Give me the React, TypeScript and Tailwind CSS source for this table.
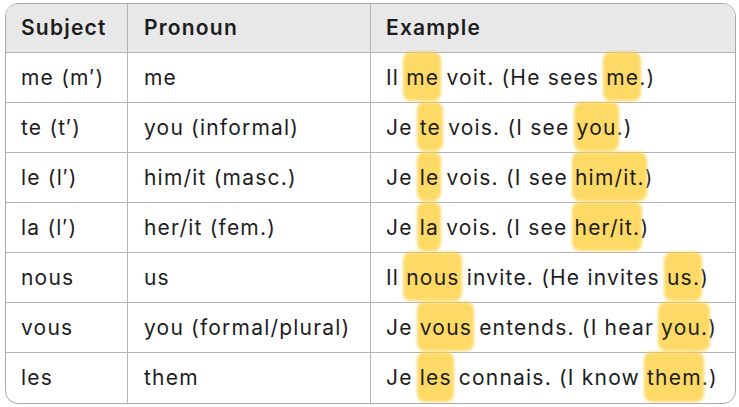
import React from "react";

type Part = string | { hl: string };

const rows: Array<{ subject: string; pronoun: string; example: Part[] }> = [
  { subject: "me (m′)", pronoun: "me", example: ["Il ", { hl: "me" }, " voit. (He sees ", { hl: "me" }, ".)"] },
  { subject: "te (t′)", pronoun: "you (informal)", example: ["Je ", { hl: "te" }, " vois. (I see ", { hl: "you" }, ".)"] },
  { subject: "le (l′)", pronoun: "him/it (masc.)", example: ["Je ", { hl: "le" }, " vois. (I see ", { hl: "him/it." }, ")"] },
  { subject: "la (l′)", pronoun: "her/it (fem.)", example: ["Je ", { hl: "la" }, " vois. (I see ", { hl: "her/it." }, ")"] },
  { subject: "nous", pronoun: "us", example: ["Il ", { hl: "nous" }, " invite. (He invites ", { hl: "us." }, ")"] },
  { subject: "vous", pronoun: "you (formal/plural)", example: ["Je ", { hl: "vous" }, " entends. (I hear ", { hl: "you." }, ")"] },
  { subject: "les", pronoun: "them", example: ["Je ", { hl: "les" }, " connais. (I know ", { hl: "them" }, ".)"] },
];

// marker-pen style highlight behind a word
function Marker({ children }: { children: string }) {
  return (
    <span className="relative inline-block">
      <span className="absolute -left-[3px] -right-[2px] -top-[10px] -bottom-[8px] rounded-[8px] bg-[#fccf3e]/80 blur-[1.8px]" />
      <span className="relative">{children}</span>
    </span>
  );
}

export default function App() {
  const cell = "flex items-center border-[#b4b4b4]";
  return (
    <div className="pt-[3px] pl-[5px] bg-white w-[739px] h-[407px] font-['Inter','Liberation_Sans',sans-serif] text-[21px] tracking-[1.2px] text-[#1d1d1f]">
      <div className="w-[731px] overflow-hidden rounded-[13px] border border-[#a9a9a9]">
        <div className="grid grid-cols-[122px_243px_1fr]">
          <div className={`${cell} h-[49px] bg-[#e8e8e8] pl-[15px] font-semibold border-r border-b`}>Subject</div>
          <div className={`${cell} h-[49px] bg-[#e8e8e8] pl-[16px] font-semibold border-r border-b`}>Pronoun</div>
          <div className={`${cell} h-[49px] bg-[#e8e8e8] pl-[15px] font-semibold border-b`}>Example</div>
          {rows.map((r, i) => {
            const last = i === rows.length - 1;
            const b = last ? "" : "border-b";
            return (
              <React.Fragment key={r.subject}>
                <div className={`${cell} h-[50px] pl-[15px] border-r ${b}`}>{r.subject}</div>
                <div className={`${cell} h-[50px] pl-[16px] border-r ${b}`}>{r.pronoun}</div>
                <div className={`${cell} h-[50px] pl-[15px] ${b}`}>
                  <span className="whitespace-pre">
                    {r.example.map((p, j) =>
                      typeof p === "string" ? <span key={j}>{p}</span> : <Marker key={j}>{p.hl}</Marker>
                    )}
                  </span>
                </div>
              </React.Fragment>
            );
          })}
        </div>
      </div>
    </div>
  );
}
